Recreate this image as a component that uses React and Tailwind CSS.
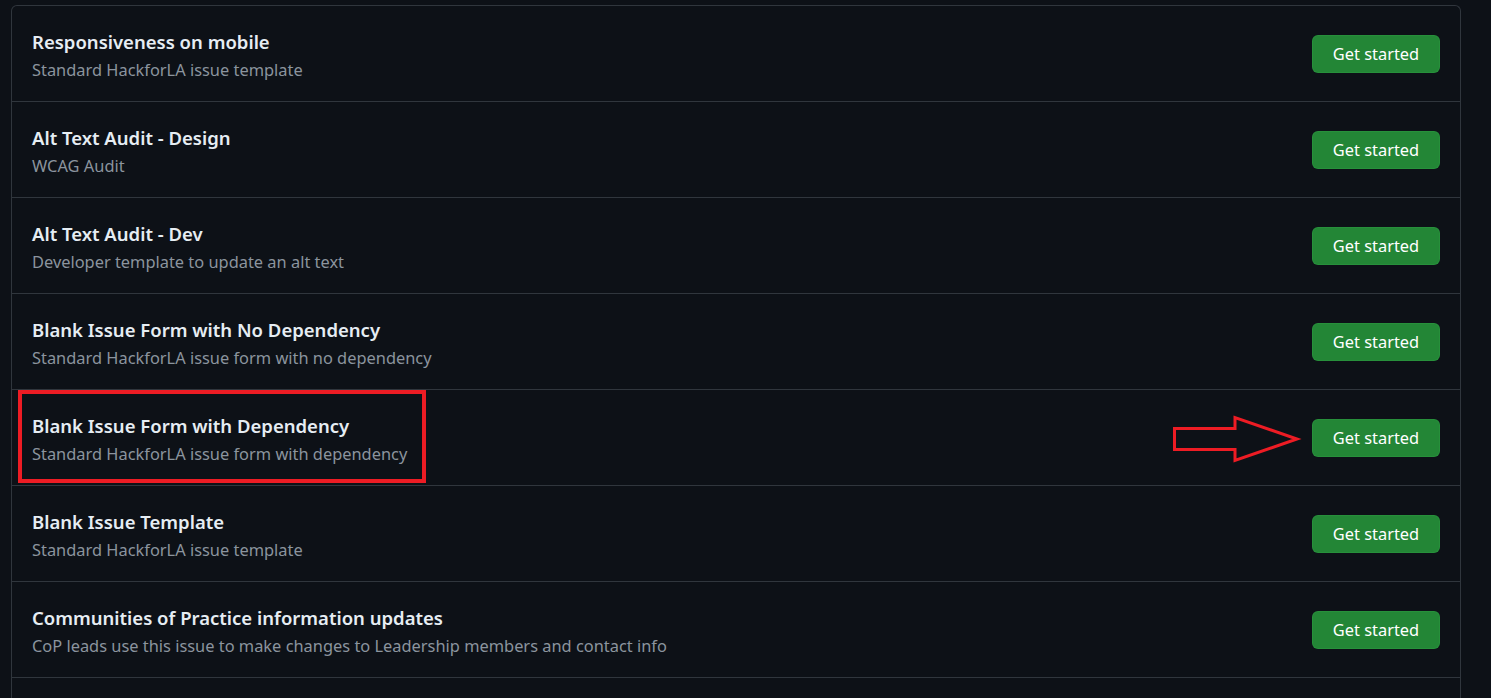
import React from "react";

const templates = [
  { title: "Responsiveness on mobile", desc: "Standard HackforLA issue template" },
  { title: "Alt Text Audit - Design", desc: "WCAG Audit" },
  { title: "Alt Text Audit - Dev", desc: "Developer template to update an alt text" },
  { title: "Blank Issue Form with No Dependency", desc: "Standard HackforLA issue form with no dependency" },
  { title: "Blank Issue Form with Dependency", desc: "Standard HackforLA issue form with dependency", marked: true },
  { title: "Blank Issue Template", desc: "Standard HackforLA issue template" },
  { title: "Communities of Practice information updates", desc: "CoP leads use this issue to make changes to Leadership members and contact info" },
];

function Arrow() {
  return (
    <svg
      className="absolute left-[1160px] top-[22px]"
      width="130"
      height="54"
      viewBox="0 0 130 54"
    >
      <polygon
        points="2.5,16.5 63,16.5 63,5.5 125,27 63,48.5 63,37.5 2.5,37.5"
        fill="none"
        stroke="#ed1c24"
        strokeWidth="3"
      />
    </svg>
  );
}

function Row({ title, desc, marked }) {
  return (
    <div className="relative flex h-[96px] items-center justify-between border-b border-[#30363d] px-5">
      <div className="pt-[4px]">
        <div className="text-[18.5px] font-semibold leading-[28px] text-[#e6edf3]">{title}</div>
        <div className="text-[16.4px] leading-[28px] text-[#8b949e]">{desc}</div>
      </div>
      <button className="h-[38px] w-[128px] rounded-[6px] border border-[#2ea043]/40 bg-[#238636] pt-[1px] text-[16.4px] text-white">
        Get started
      </button>
      {marked && (
        <>
          <div className="absolute left-[6px] top-[0px] h-[93px] w-[408px] border-[4px] border-[#ed1c24]" />
          <Arrow />
        </>
      )}
    </div>
  );
}

export default function App() {
  return (
    <div
      className="h-[698px] w-[1491px] overflow-hidden bg-[#0d1117] pl-[11px] pt-[5px]"
      style={{ fontFamily: '"Noto Sans", "Open Sans", sans-serif' }}
    >
      <div className="w-[1450px] rounded-t-[6px] border border-b-0 border-[#30363d]">
        {templates.map((t) => (
          <Row key={t.title} {...t} />
        ))}
        <div className="h-[96px]" />
      </div>
    </div>
  );
}
